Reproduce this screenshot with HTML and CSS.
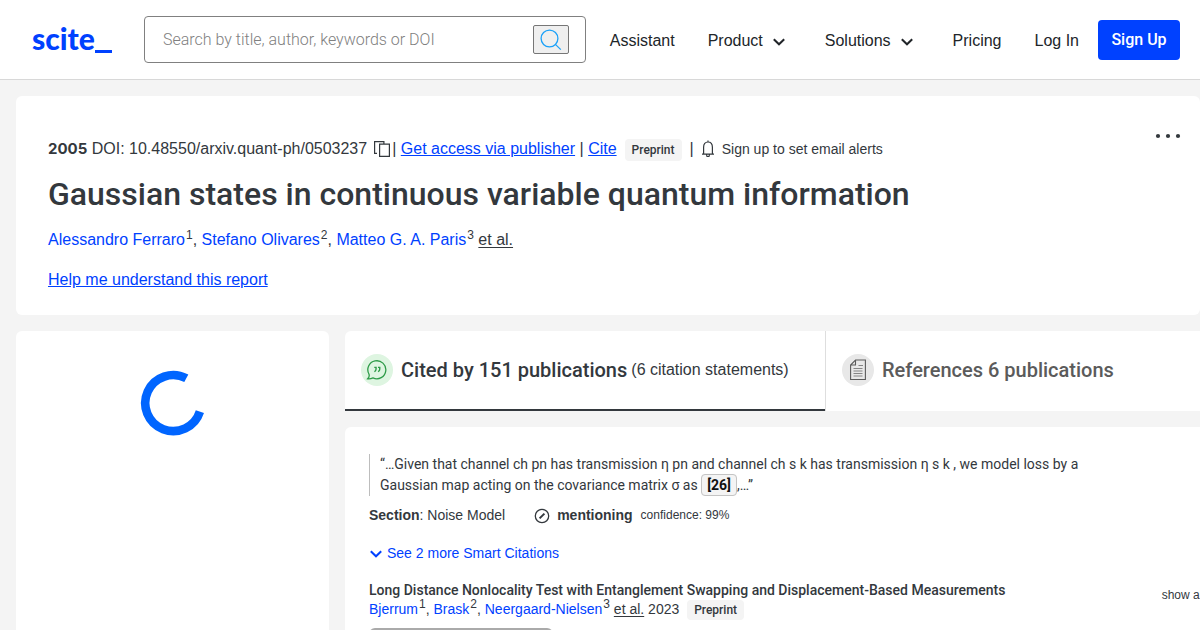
FILE: index.html
```html
<!DOCTYPE html>
<html lang="en">
<head>
<meta charset="utf-8">
<meta name="viewport" content="width=device-width, initial-scale=1">
<title>Gaussian states in continuous variable quantum information</title>
<link rel="stylesheet" href="styles.css">
</head>
<body>
<header class="header">
  <a class="logo" href="#" aria-label="scite home">scite<span class="logo-bar"></span></a>
  <form class="search">
    <input class="search-input" type="text" aria-label="Search" placeholder="Search by title, author, keywords or DOI">
    <button class="search-button" type="button" aria-label="Search">
      <svg width="22" height="22" viewBox="0 0 22 22" fill="none" stroke="#1ba1f8" stroke-width="1.3"><circle cx="9.5" cy="9.5" r="8.4"/><path d="M15.4 15.4l5.4 5.2"/></svg>
    </button>
  </form>
  <nav class="nav">
    <a class="nav-link" href="#">Assistant</a>
    <a class="nav-link" href="#">Product <svg class="chevron" width="12" height="8" viewBox="0 0 12 8" fill="none" stroke="currentColor" stroke-width="2"><path d="M.8 1.2L6 6.3l5.200-5.100"/></svg></a>
    <a class="nav-link" href="#">Solutions <svg class="chevron" width="12" height="8" viewBox="0 0 12 8" fill="none" stroke="currentColor" stroke-width="2"><path d="M.8 1.2L6 6.3l5.200-5.100"/></svg></a>
    <a class="nav-link" href="#">Pricing</a>
    <a class="nav-link" href="#">Log In</a>
  </nav>
  <a class="signup" href="#">Sign Up</a>
</header>

<main class="page">
  <section class="card paper">
    <button class="more" type="button" aria-label="More options"><svg width="26" height="6" viewBox="0 0 26 6" fill="currentColor"><circle cx="3" cy="3" r="2.100"/><circle cx="13" cy="3" r="2.100"/><circle cx="23" cy="3" r="2.100"/></svg></button>
    <div class="meta">
      <span><b class="year">2005</b> DOI: 10.48550/arxiv.quant-ph/0503237</span>
      <button class="copy" type="button" aria-label="Copy DOI"><svg width="18" height="18" viewBox="0 0 18 18" fill="none" stroke="currentColor" stroke-width="1.200"><path d="M4 13.400H1.600V1.600h9.300V4M6.600 4.100h9.800v12.300H6.600z"/></svg></button>
      <span class="links">| <a href="#">Get access via publisher</a> | <a href="#">Cite</a></span>
      <span class="tag">Preprint</span>
      <span class="bar">|</span>
      <button class="alerts" type="button"><svg width="14" height="18" viewBox="0 0 14 18" fill="none" stroke="currentColor" stroke-width="1.200"><path d="M1 14.200h12M2.600 14V7.300C2.600 4.200 4.300 2 7 2s4.400 2.200 4.400 5.300V14M7 2V.6M5.500 14.400c0 2.800 3 2.800 3 0"/></svg>Sign up to set email alerts</button>
    </div>
    <h1 class="title">Gaussian states in continuous variable quantum information</h1>
    <p class="authors"><a href="#">Alessandro Ferraro</a><sup>1</sup>, <a href="#">Stefano Olivares</a><sup>2</sup>, <a href="#">Matteo G. A. Paris</a><sup>3</sup> <span class="etal">et al.</span></p>
    <a class="help" href="#">Help me understand this report</a>
  </section>

  <div class="columns">
    <aside class="card sidebar">
      <svg width="66" height="66" viewBox="0 0 66 66" fill="none" stroke="#0065ff" stroke-width="8.600" role="img" aria-label="Loading"><path d="M46.300 8.300A28 28 0 1 0 59.900 41.600"/></svg>
    </aside>
    <div class="content">
      <div class="tabs">
        <button class="tab tab-active" type="button">
          <span class="tab-icon cited"><svg width="22" height="22" viewBox="0 0 22 22" fill="none" stroke="#2e9b48" stroke-width="1.300"><path d="M3 15.200A9 9 0 1 1 7 18.900C5.500 19.600 3.500 20 1.700 19.800 2.800 18.700 3.600 17 3 15.200z"/><path d="M8.300 8.300h1.800c.2 2.200-.3 3.700-1.700 4.500M12 8.300h1.800c.2 2.200-.3 3.700-1.700 4.500"/></svg></span>
          <span class="tab-name">Cited by 151 publications</span><span class="tab-note">(6 citation statements)</span>
        </button>
        <button class="tab" type="button">
          <span class="tab-icon refs"><svg width="18" height="22" viewBox="0 0 18 22" fill="none" stroke="currentColor" stroke-width="1.100"><path d="M6.500 1H16.400V20.500H1.600V6zM6.500 1V6H1.600"/><path stroke="#858585" d="M9.500 6.500h4.500M4.500 9.500h9M4.500 12h9M4.500 14.500h9M4.500 17h9"/></svg></span>
          <span class="tab-name">References 6 publications</span>
        </button>
      </div>

      <article class="card citation">
        <blockquote class="quote">“…Given that channel ch pn has transmission η pn and channel ch s k has transmission η s k , we model loss by a Gaussian map acting on the covariance matrix σ as <span class="ref">[26]</span>,…”</blockquote>
        <div class="details">
          <span class="section-name"><b>Section</b>: Noise Model</span>
          <svg width="16" height="16" viewBox="0 0 16 16" fill="none" stroke="currentColor" stroke-width="1.300"><circle cx="8" cy="8" r="6.700"/><path stroke-width="2" d="M5.600 10.400l4.800-4.800"/></svg>
          <b class="mention">mentioning</b>
          <span class="confidence">confidence: 99%</span>
        </div>
        <button class="see-more" type="button"><svg width="12" height="8" viewBox="0 0 12 8" fill="none" stroke="currentColor" stroke-width="2"><path d="M.8 1.200L6 6.300l5.200-5.100"/></svg>See 2 more Smart Citations</button>
        <div class="source">
          <div>
            <h2 class="source-title">Long Distance Nonlocality Test with Entanglement Swapping and Displacement-Based Measurements</h2>
            <div class="source-authors"><a href="#">Bjerrum</a><sup>1</sup>, <a href="#">Brask</a><sup>2</sup>, <a href="#">Neergaard-Nielsen</a><sup>3</sup> <span class="etal">et al.</span> 2023 <span class="tag source-tag">Preprint</span></div>
          </div>
          <button class="show" type="button">show all</button>
        </div>
        <button class="source-action" type="button" aria-label="View full text"></button>
      </article>
    </div>
  </div>
</main>
</body>
</html>
```
FILE: styles.css
```css
* { box-sizing: border-box; }
body {
  margin: 0;
  overflow-x: hidden;
  background: #f4f4f4;
  color: #33383d;
  font: 16px/24px "Liberation Sans", Arial, sans-serif;
}
html { scrollbar-width: none; }
button { padding: 0; border: 0; background: none; color: inherit; font: inherit; cursor: pointer; }
a { color: #0041ff; }
svg { display: block; flex: none; }
h1, h2, p, blockquote { margin: 0; }
sup { font-size: 12px; line-height: 0; margin-left: 1px; vertical-align: 6px; }

.header {
  display: flex;
  align-items: center;
  height: 80px;
  padding: 0 20px 0 32px;
  background: #fff;
  border-bottom: 1px solid #d8d8d8;
}
.logo {
  display: flex;
  align-items: flex-end;
  width: 80px;
  margin: 0 32px 4px 0;
  font: 900 30px/32px Lato, sans-serif;
  color: #0041ff;
  text-decoration: none;
}
.logo-bar { flex: 1; height: 3px; margin-bottom: 1px; background: #0041ff; }
.search {
  flex: 1;
  display: flex;
  align-items: center;
  height: 47px;
  padding: 0 16px 0 18px;
  border: 1px solid #808080;
  border-radius: 4px;
}
.search-input { flex: 1; min-width: 0; padding: 0; border: 0; outline: 0; background: none; font: 300 16px/24px Roboto, sans-serif; }
.search-input::placeholder { color: #808080; opacity: 1; }
.search-button {
  display: grid;
  place-items: center;
  width: 36px;
  height: 29px;
  border: 1px solid #767676;
  border-radius: 2px;
  background: #efefef;
}
.nav { display: flex; gap: 33px; margin: 2px 19px 0 24px; }
.nav-link { display: flex; align-items: center; color: #212529; text-decoration: none; white-space: nowrap; }
.chevron { margin: 2px 7px 0 10px; }
.signup {
  min-width: 82px;
  padding: 8px 12px;
  border-radius: 4px;
  background: #0041ff;
  color: #fff;
  font-family: Roboto, sans-serif;
  font-weight: 500;
  text-align: center;
  text-decoration: none;
  white-space: nowrap;
}

.page { padding: 16px 0 0 16px; }
.card { background: #fff; border-radius: 6px; }
.paper { position: relative; padding: 40px 32px 23px; }
.more { position: absolute; top: 37px; right: 19px; }
.meta { display: flex; align-items: center; white-space: nowrap; }
.year { font: 700 15px/24px Inter, sans-serif; }
.copy { margin: 0 1px 0 6px; }
.tag {
  padding: 0 7px;
  border-radius: 4px;
  background: #f4f4f4;
  font: 500 12px/22px Roboto, sans-serif;
}
.meta .tag { margin: 3px 8px 0; }
.alerts { display: flex; align-items: center; gap: 7px; margin-left: 7px; font-size: 14px; }
.title { margin-top: 11px; font: 500 32px/44px Roboto, sans-serif; }
.authors { margin-top: 12px; }
.authors a { text-decoration: none; }
.etal { text-decoration: underline; text-underline-offset: 2px; }
.help { display: inline-block; margin-top: 16px; }

.columns { display: grid; grid-template-columns: 313px 1fr; gap: 16px; margin-top: 16px; }
.sidebar { display: flex; justify-content: center; min-height: 300px; padding-top: 39px; }
.content { margin-right: -32px; }
.tabs { display: grid; grid-template-columns: 480px 1fr; height: 80px; border-radius: 6px 6px 0 0; overflow: hidden; }
.tab {
  display: flex;
  align-items: center;
  padding: 0 16px 2px;
  border-left: 1px solid #dedede;
  background: #fff;
  color: #5b5b5b;
  white-space: nowrap;
}
.tab-active { padding-bottom: 0; border-left: 0; border-bottom: 2px solid #33383d; color: #33383d; }
.tab-icon { display: grid; place-items: center; width: 32px; height: 32px; margin-right: 8px; border-radius: 50%; }
.cited { background: #def5e1; }
.refs { background: #e8e8e8; }
.tab-name { font: 500 20px/24px Roboto, sans-serif; }
.tab-note { margin-left: 4px; }

.citation { margin-top: 16px; padding: 27px 27px 24px 24px; font-size: 14px; line-height: 21px; }
.quote { max-width: 720px; padding-left: 10px; border-left: 1px solid #bdbdbd; font-family: Roboto, sans-serif; }
.ref {
  padding: 2px 5px;
  border: 1px solid #c4c4c4;
  border-radius: 4px;
  background: #f4f4f4;
  color: #111;
  font-weight: 700;
}
.details { display: flex; align-items: center; margin-top: 9px; }
.section-name { margin-right: 29px; }
.mention { margin: 0 8px 0 7px; }
.confidence { font-size: 12px; }
.see-more { display: flex; align-items: center; gap: 5px; margin-top: 17px; padding-left: 1px; color: #0041ff; }
.source { display: flex; justify-content: space-between; margin-top: 17px; }
.source-title { font: 500 14px/18px Roboto, sans-serif; }
.source-authors a { text-decoration: none; }
.source-tag { display: inline-block; margin-left: 4px; line-height: 20px; }
.show { align-self: flex-start; margin-top: 4px; font-size: 12px; line-height: 20px; }
.source-action { width: 184px; height: 32px; margin-top: 8px; border: 2px solid #aaa; border-radius: 6px; }
```
